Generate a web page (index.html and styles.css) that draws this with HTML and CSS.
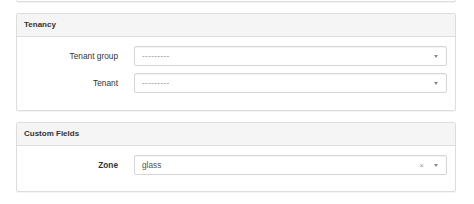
FILE: index.html
```html
<!DOCTYPE html>
<html lang="en">
<head>
    <meta charset="UTF-8">
    <meta name="viewport" content="width=device-width, initial-scale=1.0">
    <title>Tenancy</title>
    <link rel="stylesheet" href="styles.css">
</head>
<body>
    <div class="page">
        <div class="panel panel-stub"></div>

        <div class="panel">
            <div class="panel-heading">Tenancy</div>
            <div class="panel-body">
                <label class="field-label">Tenant group</label>
                <div class="select">
                    <span class="select-value placeholder">---------</span>
                    <span class="caret"></span>
                </div>

                <label class="field-label">Tenant</label>
                <div class="select">
                    <span class="select-value placeholder">---------</span>
                    <span class="caret"></span>
                </div>
            </div>
        </div>

        <div class="panel">
            <div class="panel-heading">Custom Fields</div>
            <div class="panel-body panel-body-custom">
                <label class="field-label field-label-bold">Zone</label>
                <div class="select">
                    <span class="select-value">glass</span>
                    <span class="clear">&times;</span>
                    <span class="caret"></span>
                </div>
            </div>
        </div>
    </div>
</body>
</html>
```

FILE: styles.css
```css
body {
    margin: 0;
    background: #fff;
    font-family: "Liberation Sans", Arial, Helvetica, sans-serif;
    font-size: 8.3px;
    color: #333;
}

.page {
    padding: 0 18px 0 16px;
}

.panel {
    border: 1px solid #ddd;
    border-radius: 2px;
    background: #fff;
    box-shadow: 0 1px 1px rgba(0, 0, 0, 0.05);
    margin-bottom: 11px;
}

.panel-stub {
    height: 1px;
    border-top: none;
    border-radius: 0 0 2px 2px;
}

.panel-heading {
    height: 22px;
    line-height: 22px;
    padding: 0 7px;
    background: #f5f5f5;
    border-bottom: 1px solid #ddd;
    font-size: 8px;
    font-weight: bold;
    color: #333;
}

.panel-body {
    display: grid;
    grid-template-columns: 101px 1fr;
    column-gap: 16px;
    row-gap: 7px;
    align-items: center;
    padding: 9px 8px 17px 0;
}

.panel-body-custom {
    padding-bottom: 16px;
}

.field-label {
    text-align: right;
    color: #333;
}

.field-label-bold {
    font-weight: bold;
}

.select {
    display: flex;
    align-items: center;
    height: 20px;
    box-sizing: border-box;
    padding: 0 8px 0 7px;
    border: 1px solid #d6d6d6;
    border-radius: 2px;
    background: #fff;
    box-shadow: inset 0 1px 1px rgba(0, 0, 0, 0.05);
}

.select-value {
    flex: 1;
    color: #555;
}

.placeholder {
    color: #999;
    letter-spacing: 0.3px;
}

.clear {
    margin-right: 10px;
    font-size: 8px;
    color: #999;
}

.caret {
    width: 0;
    height: 0;
    border-top: 3px solid #888;
    border-left: 2px solid transparent;
    border-right: 2px solid transparent;
}
```
